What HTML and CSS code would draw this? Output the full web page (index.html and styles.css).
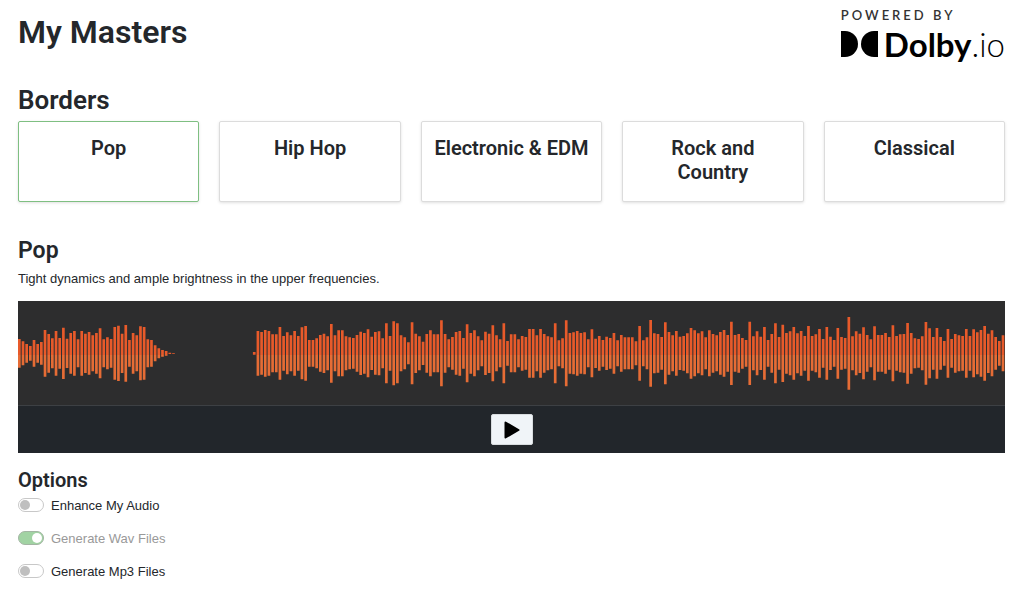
FILE: index.html
```
<!DOCTYPE html>
<html lang="en">
    <head>
        <meta charset="UTF-8">
        <meta name="viewport" content="width=device-width, initial-scale=1.0">
        <title>My Masters</title>
        <link rel="stylesheet" href="styles.css">
    </head>
    <body>
        <header>
            <h1>My Masters</h1>
            <div class="brand">
                <span class="powered">POWERED BY</span>
                <div class="logo">
                    <svg width="37" height="26" viewBox="0 0 37 26" aria-hidden="true">
                        <path d="M0 0h4a13 13 0 0 1 0 26H0z"/>
                        <path d="M37 0h-4a13 13 0 0 0 0 26h4z"/>
                    </svg>
                    <span class="logo-name">Dolby<span class="logo-io">.io</span></span>
                </div>
            </div>
        </header>

        <main>
            <h2>Borders</h2>
            <div class="presets">
                <button type="button" class="preset active">Pop</button>
                <button type="button" class="preset">Hip Hop</button>
                <button type="button" class="preset">Electronic &amp; EDM</button>
                <button type="button" class="preset">Rock and Country</button>
                <button type="button" class="preset">Classical</button>
            </div>

            <section class="details">
                <h3>Pop</h3>
                <p>Tight dynamics and ample brightness in the upper frequencies.</p>
            </section>

            <div class="player">
                <svg id="waveform" class="waveform" viewBox="0 0 2958 312" preserveAspectRatio="none" aria-label="Waveform">
                    <defs>
                        <linearGradient id="waveFill" gradientUnits="userSpaceOnUse" x1="0" y1="0" x2="0" y2="312">
                            <stop offset="0.518" stop-color="#e85a2a"/>
                            <stop offset="0.518" stop-color="#e66c35"/>
                        </linearGradient>
                    </defs>
                </svg>
                <div class="controls">
                    <button type="button" class="play" aria-label="Play">
                        <svg width="16" height="18" viewBox="0 0 16 18" aria-hidden="true">
                            <path d="M1.5 1.5 14.5 9 1.5 16.5z" stroke="#000" stroke-width="2" stroke-linejoin="round"/>
                        </svg>
                    </button>
                </div>
            </div>

            <section class="options">
                <h4>Options</h4>
                <label class="option"><input type="checkbox"> Enhance My Audio</label>
                <label class="option disabled"><input type="checkbox" checked disabled> Generate Wav Files</label>
                <label class="option"><input type="checkbox"> Generate Mp3 Files</label>
            </section>
        </main>

        <script>
            const intro = [43,36,28,22,40,28,34,70,58,45,67,46,77,44,61,67,42,67,59,64,54,61,75,42,48,43,79,83,59,85,40,61,54,81,79,42,40,24,15,10,7,2,1];
            const silence = new Array(21).fill(0);
            const song = [
                4,67,64,70,67,57,57,79,52,63,54,67,52,78,82,40,40,45,55,59,51,88,54,69,69,51,48,46,55,65,61,72,50,64,66,45,90,52,
                96,90,54,48,33,93,59,51,35,58,69,57,57,99,58,42,49,64,67,46,87,61,69,51,39,65,59,84,54,42,90,37,57,57,42,52,49,73,73,54,73,58,51,48,90,39,45,99,61,63,67,61,63,42,
                72,44,52,40,50,46,61,39,55,48,48,48,36,82,39,48,100,60,58,49,93,64,54,67,50,52,60,76,69,60,66,48,69,58,54,64,70,55,95,55,58,46,40,95,51,66,50,79,40,58,90,49,86,61,66,
                79,60,67,52,82,52,57,73,43,79,50,40,76,49,46,109,51,66,59,78,55,42,81,55,55,61,49,84,52,57,58,91,61,45,43,51,94,75,49,76,49,37,73,43,58,54,52,73,52,72,63,70,82,59,69,49,37,54,13
            ];
            const peaks = intro.concat(silence, song);

            // one bar every 11 units, 8 wide, mirrored around the middle line
            let d = '';
            peaks.forEach((peak, i) => {
                if (peak > 0) {
                    d += `M${i * 11} ${157 - peak}h8v${peak * 2}h-8z`;
                }
            });
            const bars = document.createElementNS('http://www.w3.org/2000/svg', 'path');
            bars.setAttribute('d', d);
            bars.setAttribute('fill', 'url(#waveFill)');
            document.getElementById('waveform').appendChild(bars);
        </script>
    </body>
</html>
```
FILE: styles.css
```
* {
box-sizing: border-box;
}

body {
margin: 0;
padding: 8px 19px 12px 18px;
background-color: #fff;
color: #24272b;
font-family: "Liberation Sans", Arial, sans-serif;
font-size: 13px;
}

h1, h2, h3, h4 {
margin: 0;
font-family: Roboto, sans-serif;
font-weight: 600;
}

/* Header */
header {
display: flex;
justify-content: space-between;
align-items: flex-start;
height: 76px;
}

h1 {
margin-top: 4px;
font-size: 32px;
line-height: 40px;
}

.brand {
font-family: Lato, sans-serif;
color: #000;
}

.powered {
display: block;
font-size: 13px;
line-height: 14px;
font-weight: 600;
letter-spacing: 3px;
color: #333;
}

.logo {
display: flex;
align-items: center;
gap: 6px;
height: 44px;
}

.logo-name {
font-size: 33px;
line-height: 44px;
font-weight: 700;
}

.logo-io {
font-weight: 300;
}

/* Presets */
h2 {
font-size: 26px;
line-height: 32px;
margin-bottom: 5px;
}

.presets {
display: grid;
grid-template-columns: repeat(5, 1fr);
gap: 20px;
}

.preset {
display: flex;
justify-content: center;
align-items: flex-start;
min-height: 81px;
padding: 14px 12px;
border: 1px solid #dcdcdc;
border-radius: 2px;
background-color: #fff;
box-shadow: 0 1px 3px rgba(0, 0, 0, 0.12);
color: inherit;
font-family: Roboto, sans-serif;
font-size: 20px;
font-weight: 600;
line-height: 24px;
cursor: pointer;
}

.preset.active {
border-color: #7fbf82;
}

.details {
margin: 34px 0 12px;
}

h3 {
font-size: 23px;
line-height: 30px;
}

.details p {
margin: 3px 0 0;
line-height: 20px;
}

/* Player */
.player {
background-color: #22262b;
}

.waveform {
display: block;
width: 100%;
height: 104px;
background-color: #2d2d2e;
}

.controls {
display: flex;
justify-content: center;
padding: 8px;
border-top: 1px solid #3d4044;
}

.play {
display: flex;
justify-content: center;
align-items: center;
width: 42px;
height: 31px;
padding: 0;
border: 1px solid #d8dcdf;
border-radius: 2px;
background-color: #f0f4f8;
cursor: pointer;
}

/* Options */
.options {
margin-top: 15px;
}

h4 {
font-size: 20px;
line-height: 24px;
margin-bottom: 3px;
}

.option {
display: flex;
align-items: center;
gap: 7px;
height: 20px;
margin-bottom: 13px;
}

.option.disabled {
color: #999;
}

.option input {
appearance: none;
display: flex;
align-items: center;
width: 26px;
height: 14px;
margin: 0;
padding: 0 1px;
border: 1px solid #c8c8c8;
border-radius: 7px;
background-color: #fff;
}

.option input::before {
content: "";
width: 10px;
height: 10px;
border-radius: 50%;
background-color: #bfbfbf;
}

.option input:checked {
justify-content: flex-end;
border-color: #a3b5a3;
background-color: #a1d3a3;
}

.option input:checked::before {
background-color: #fff;
}
```
